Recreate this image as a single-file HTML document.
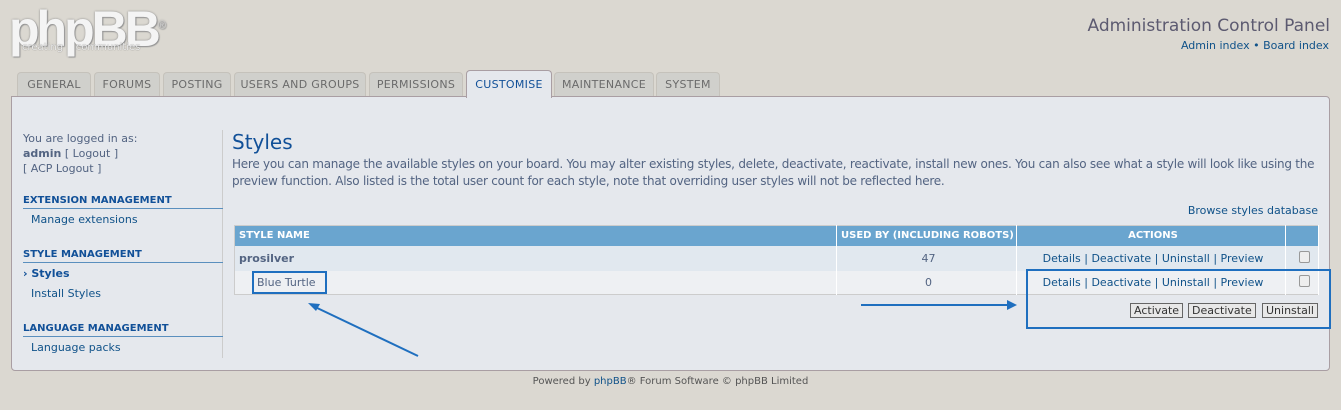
<!DOCTYPE html>
<html><head><meta charset="utf-8"><style>
*{margin:0;padding:0;box-sizing:border-box}
body{width:1341px;height:410px;background:#dbd8d1;font-family:"DejaVu Sans","Liberation Sans",sans-serif;font-size:11px;color:#536482;position:relative;overflow:hidden}
.a{position:absolute;white-space:nowrap}
.logo{left:9px;top:0px;font-family:"Liberation Sans",sans-serif;font-size:50px;font-weight:bold;color:#f4f4f4;letter-spacing:-3px;text-shadow:0 0 2px #888,1px 1px 1px #999}
.logo2{left:22px;top:42px;font-size:10px;color:#eee;text-shadow:0 0 1px #666}
.tab{position:absolute;top:72px;height:25px;background:#d0d0cc;border:1px solid #c5c2bb;border-bottom:none;border-radius:4px 4px 0 0;font-size:11px;color:#6b6b6b;text-align:center;line-height:24px;letter-spacing:.3px}
.panel{position:absolute;left:11px;top:96px;width:1319px;height:275px;background:#e5e8ed;border:1px solid #a99ea3;border-radius:0 4px 4px 4px}
.menuh{font-size:10px;font-weight:bold;color:#115098;border-bottom:1px solid #5a8fbe;width:200px;padding-bottom:2px}
.ml{color:#105289}
th{background:#6aa5cf;color:#fff;font-size:10px;font-weight:bold;height:20px;text-align:left;padding-left:4px;border-right:1px solid #fff}
td{height:24px;border-right:1px solid #fff;padding-left:4px}
.btn{position:absolute;top:303px;height:15px;border:1px solid #666;background:#e8e8e8;font-size:11px;line-height:13px;padding:0 3px;color:#333}
.cb{display:inline-block;width:11px;height:12px;border:1px solid #999;border-radius:2px;background:#eee}
</style></head><body>
<div class="a logo">phpBB<sup style="font-size:11px;color:#ccc">®</sup></div>
<div class="a logo2">creating&nbsp;&nbsp;&nbsp;&nbsp;communities</div>
<div class="a" style="right:11px;top:16px;font-size:17px;color:#5c5a70">Administration Control Panel</div>
<div class="a" style="right:12px;top:39px;color:#105289">Admin index • Board index</div>

<div class="tab" style="left:17px;width:74px">GENERAL</div>
<div class="tab" style="left:94px;width:66px">FORUMS</div>
<div class="tab" style="left:163px;width:68px">POSTING</div>
<div class="tab" style="left:234px;width:132px">USERS AND GROUPS</div>
<div class="tab" style="left:369px;width:94px">PERMISSIONS</div>
<div class="tab" style="left:466px;width:86px;top:70px;height:28px;background:#e5e8ed;color:#115098;border-color:#a99ea3;z-index:2;line-height:28px">CUSTOMISE</div>
<div class="tab" style="left:554px;width:100px">MAINTENANCE</div>
<div class="tab" style="left:656px;width:64px">SYSTEM</div>

<div class="panel"></div>
<div class="a" style="left:23px;top:131px;line-height:15px">You are logged in as:<br><b>admin</b> [ Logout ]<br>[ ACP Logout ]</div>
<div class="a" style="left:222px;top:130px;width:1px;height:228px;background:#ccc"></div>
<div class="a menuh" style="left:23px;top:195px">EXTENSION MANAGEMENT</div>
<div class="a ml" style="left:31px;top:213px">Manage extensions</div>
<div class="a menuh" style="left:23px;top:249px">STYLE MANAGEMENT</div>
<div class="a" style="left:23px;top:267px;color:#115098;font-weight:bold">› Styles</div>
<div class="a ml" style="left:31px;top:287px">Install Styles</div>
<div class="a menuh" style="left:23px;top:323px">LANGUAGE MANAGEMENT</div>
<div class="a ml" style="left:31px;top:341px">Language packs</div>

<div class="a" style="left:232px;top:130px;font-size:20px;color:#115098">Styles</div>
<div class="a" style="left:232px;top:156px;font-size:12px;line-height:17px;white-space:normal;width:1100px;letter-spacing:-0.25px">Here you can manage the available styles on your board. You may alter existing styles, delete, deactivate, reactivate, install new ones. You can also see what a style will look like using the preview function. Also listed is the total user count for each style, note that overriding user styles will not be reflected here.</div>
<div class="a" style="right:23px;top:204px;color:#105289">Browse styles database</div>

<table class="a" style="left:234px;top:225px;width:1085px;border-collapse:collapse;border:1px solid #ccc;font-size:11px">
<tr><th style="width:602px">STYLE NAME</th><th style="width:180px">USED BY (INCLUDING ROBOTS)</th><th style="width:269px;text-align:center">ACTIONS</th><th></th></tr>
<tr style="background:#e1e8ef"><td style="font-weight:bold;height:25px">prosilver</td><td style="text-align:center">47</td><td style="text-align:center;color:#105289">Details | Deactivate | Uninstall | Preview</td><td style="text-align:center"><span class="cb"></span></td></tr>
<tr style="background:#eef0f3"><td style="padding-left:22px">Blue Turtle</td><td style="text-align:center">0</td><td style="text-align:center;color:#105289">Details | Deactivate | Uninstall | Preview</td><td style="text-align:center"><span class="cb"></span></td></tr>
</table>
<div class="btn" style="left:1130px">Activate</div>
<div class="btn" style="left:1188px">Deactivate</div>
<div class="btn" style="left:1262px">Uninstall</div>

<svg class="a" style="left:0;top:0" width="1341" height="410">
<rect x="253" y="272" width="73" height="21" fill="none" stroke="#1f6fbf" stroke-width="2"/>
<rect x="1027" y="270" width="303" height="58" fill="none" stroke="#1f6fbf" stroke-width="2"/>
<line x1="418" y1="356" x2="313" y2="306" stroke="#1f6fbf" stroke-width="2"/>
<polygon points="308,303 320,304 316,311" fill="#1f6fbf"/>
<line x1="861" y1="305" x2="1010" y2="305" stroke="#1f6fbf" stroke-width="2"/>
<polygon points="1017,305 1007,300 1007,310" fill="#1f6fbf"/>
</svg>

<div class="a" style="left:0;width:1341px;text-align:center;top:376px;font-size:10px;color:#555">Powered by <span style="color:#105289">phpBB</span>® Forum Software © phpBB Limited</div>
</body></html>
